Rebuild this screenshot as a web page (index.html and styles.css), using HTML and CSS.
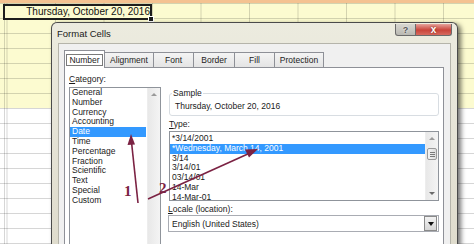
FILE: index.html
```html
<!DOCTYPE html>
<html lang="en">
<head>
    <meta charset="UTF-8">
    <title>Format Cells</title>
    <link rel="stylesheet" href="styles.css">
</head>
<body>

<div class="sheet">
    <div class="active-cell">Thursday, October 20, 2016<span class="fill-handle"></span></div>
</div>

<!-- Format Cells dialog -->
<div class="dialog">
    <div class="titlebar">
        <span class="title">Format Cells</span>
        <div class="caption-buttons">
            <span class="btn-help">?</span>
            <span class="btn-close">x</span>
        </div>
    </div>
    <div class="client">
        <div class="tabs">
            <span class="tab tab-number active"><span class="focus">Number</span></span>
            <span class="tab tab-align">Alignment</span>
            <span class="tab tab-font">Font</span>
            <span class="tab tab-border">Border</span>
            <span class="tab tab-fill">Fill</span>
            <span class="tab tab-protect">Protection</span>
        </div>
        <div class="panel">
            <div class="col-left">
                <div class="label"><u>C</u>ategory:</div>
                <div class="listbox category-list">
                    <ul class="items">
                        <li>General</li>
                        <li>Number</li>
                        <li>Currency</li>
                        <li>Accounting</li>
                        <li class="selected">Date</li>
                        <li>Time</li>
                        <li>Percentage</li>
                        <li>Fraction</li>
                        <li>Scientific</li>
                        <li>Text</li>
                        <li>Special</li>
                        <li>Custom</li>
                    </ul>
                    <div class="scrollbar">
                        <span class="arrow-up"></span>
                    </div>
                </div>
            </div>
            <div class="col-right">
                <fieldset class="sample">
                    <legend>Sample</legend>
                    <div class="sample-text">Thursday, October 20, 2016</div>
                </fieldset>
                <div class="label type-label"><u>T</u>ype:</div>
                <div class="listbox type-list">
                    <ul class="items">
                        <li>*3/14/2001</li>
                        <li class="selected">*Wednesday, March 14, 2001</li>
                        <li>3/14</li>
                        <li>3/14/01</li>
                        <li>03/14/01</li>
                        <li>14-Mar</li>
                        <li>14-Mar-01</li>
                    </ul>
                    <div class="scrollbar">
                        <span class="arrow-up"></span>
                        <span class="thumb"><i></i><i></i><i></i></span>
                        <span class="arrow-down"></span>
                    </div>
                </div>
                <div class="label locale-label"><u>L</u>ocale (location):</div>
                <div class="combo">
                    <span class="combo-text">English (United States)</span>
                    <span class="combo-btn"><span class="arrow-down dark"></span></span>
                </div>
            </div>
        </div>
    </div>
</div>

<!-- hand-drawn annotation arrows -->
<svg class="arrows" width="474" height="244" viewBox="0 0 474 244">
    <line x1="138" y1="203" x2="131.5" y2="142" stroke="#7b2243" stroke-width="1.6"/>
    <polygon points="131,134 127.5,145 135,144.5" fill="#7b2243"/>
    <line x1="148" y1="199" x2="250" y2="153" stroke="#7b2243" stroke-width="1.6"/>
    <polygon points="258,149 245,149.5 249,157.5" fill="#7b2243"/>
    <text x="124" y="196" class="num">1</text>
    <text x="159" y="193" class="num">2</text>
</svg>

</body>
</html>
```

FILE: styles.css
```css
html {
    overflow: hidden;
}
body {
    margin: 0;
    width: 474px;
    height: 244px;
    overflow: hidden;
    font-family: "Liberation Sans", Arial, sans-serif;
    position: relative;
}

/* Spreadsheet behind the dialog */
.sheet {
    height: 244px;
    padding-top: 4px;
    box-sizing: border-box;
    background-color: #fff;
    background-image:
        linear-gradient(#f4c291, #f4c291),
        repeating-linear-gradient(to bottom, rgba(0, 0, 0, 0.16) 0 1px, transparent 1px 15px),
        repeating-linear-gradient(to right, rgba(0, 0, 0, 0.16) 0 1px, transparent 1px 48.5px),
        linear-gradient(rgba(0, 0, 0, 0.16), rgba(0, 0, 0, 0.16)),
        linear-gradient(#fcfbd0, #fcfbd0);
    background-size: 100% 3px, 100% 15px, 48.5px 100%, 1px 100%, 100% 108px;
    background-position: 0 0, 0 3px, 152px 0, 4px 0, 0 0;
    background-repeat: no-repeat, repeat, repeat, no-repeat, no-repeat;
}
.active-cell {
    position: relative;
    margin-left: 3px;
    width: 145px;
    height: 12px;
    border: 2px solid #1d1d1d;
    font-size: 10px;
    line-height: 12px;
    text-align: right;
    color: #111;
    background: #fcfbd0;
}
.fill-handle {
    position: absolute;
    right: -4px;
    bottom: -4px;
    width: 4px;
    height: 4px;
    background: #1d1d1d;
    border: 1px solid #fff;
}

/* Dialog window */
.dialog {
    position: absolute;
    left: 51px;
    top: 22px;
    width: 405px;
    height: 222px;
    overflow: hidden;
    border: 1px solid #4b4b4b;
    border-bottom: none;
    border-radius: 6px 6px 0 0;
    background: linear-gradient(to bottom, #ecebdf, #dfdccd);
    box-shadow: 3px 2px 5px rgba(0, 0, 0, 0.55);
    font-size: 8.5px;
    color: #000;
}
.titlebar {
    display: flex;
    height: 20px;
}
.title {
    padding: 5px 0 0 5px;
    font-size: 9.5px;
    color: #1a1a1a;
}
.caption-buttons {
    display: flex;
    margin-left: auto;
    margin-right: 5px;
    margin-top: 1px;
    height: 12px;
}
.btn-help, .btn-close {
    display: flex;
    align-items: center;
    justify-content: center;
    border: 1px solid #6a6a6a;
    border-top: none;
    font-weight: bold;
    font-size: 9px;
    color: #fff;
}
.btn-help {
    width: 19px;
    border-radius: 0 0 0 3px;
    background: linear-gradient(#d7d6d0, #b9b8b2);
    color: #555;
    text-shadow: 0 0 2px #fff;
}
.btn-close {
    width: 35px;
    border-left: none;
    border-radius: 0 0 3px 0;
    background: linear-gradient(#e6a39b, #c9443a 55%, #d66a5f);
    font-size: 10px;
    text-shadow: 0 0 2px #6d1d14;
}

.client {
    margin: 0 6px;
    height: 201px;
    padding: 8px 0 0 5px;
    border: 1px solid #b5b4aa;
    border-bottom: none;
    background: #f0f0f0;
}

/* Tabs */
.tabs {
    display: flex;
    height: 15px;
}
.tab {
    display: flex;
    align-items: center;
    justify-content: center;
    box-sizing: border-box;
    border: 1px solid #8e9097;
    border-left: none;
    border-bottom: none;
    background: linear-gradient(#f4f4f4, #e4e4e4);
    color: #222;
}
.tab-number { width: 41px; border-left: 1px solid #8e9097; }
.tab-align { width: 49px; }
.tab-font { width: 40px; }
.tab-border { width: 41px; }
.tab-fill { width: 40px; }
.tab-protect { width: 49px; }
.tab.active {
    background: #fff;
    margin-top: -2px;
    height: 18px;
    position: relative;
    z-index: 1;
}
.focus {
    border: 1px solid #7a7a7a;
    padding: 0 2px;
    line-height: 10px;
}

.panel {
    display: flex;
    margin-right: 6px;
    height: 172px;
    overflow: hidden;
    padding: 5px 4px 0 4px;
    border: 1px solid #8e9097;
    border-bottom: none;
    background: #fff;
}
.label {
    height: 12px;
    line-height: 12px;
    color: #1a1a1a;
}
.col-left {
    width: 92px;
}
.col-left .label {
    margin-bottom: 2px;
}
.col-right {
    flex: 1;
    margin-left: 7px;
}

/* List boxes */
.listbox {
    display: flex;
    border: 1px solid #8f949b;
    background: #fff;
}
.items {
    flex: 1;
    list-style: none;
    margin: 0;
    padding: 0;
}
.items li {
    height: 9.8px;
    line-height: 9.8px;
    padding-left: 2px;
    color: #1a1a1a;
    white-space: nowrap;
}
.items li.selected {
    background: #3399ff;
    color: #fff;
}
.category-list {
    height: 160px;
}
.category-list .items li.selected {
    margin-right: 1px;
}
.scrollbar {
    display: flex;
    flex-direction: column;
    align-items: center;
    width: 12px;
    background: linear-gradient(to right, #e8e8e8, #f4f4f4);
    border-left: 1px solid #ededed;
}
.arrow-up, .arrow-down {
    width: 0;
    height: 0;
    border-left: 3px solid transparent;
    border-right: 3px solid transparent;
}
.arrow-up {
    margin-top: 5px;
    border-bottom: 3px solid #9a9a9a;
}
.arrow-down {
    margin-top: auto;
    margin-bottom: 5px;
    border-top: 3px solid #6a6a6a;
}
.arrow-down.dark {
    margin: 0;
    border-top-color: #111;
    border-left-width: 3.5px;
    border-right-width: 3.5px;
    border-top-width: 4px;
}

/* Sample group box */
.sample {
    margin: 15px 0 0 1px;
    padding: 3px 5px 3px;
    border: 1px solid #d8dde2;
    border-radius: 3px;
}
.sample legend {
    padding: 0 1px;
    margin-left: -3px;
    line-height: 10px;
    color: #1a1a1a;
}
.sample-text {
    line-height: 11px;
    color: #1a1a1a;
}
.type-label {
    margin-top: 2px;
    margin-left: 1px;
}
.type-list {
    margin-top: 1px;
    margin-left: 1px;
    height: 68px;
}
.type-list .items {
    padding-top: 2px;
}
.type-list .thumb {
    display: flex;
    flex-direction: column;
    justify-content: center;
    gap: 1px;
    align-items: center;
    width: 10px;
    height: 12px;
    margin-top: 8px;
    box-sizing: border-box;
    border: 1px solid #9a9a9a;
    border-radius: 2px;
    background: linear-gradient(to right, #f4f4f4, #dcdcdc);
}
.thumb i {
    display: block;
    width: 5px;
    height: 1px;
    background: #7a7a7a;
}
.locale-label {
    margin-top: 2px;
}
.combo {
    display: flex;
    align-items: center;
    margin-top: 0;
    height: 15px;
    border: 1px solid #a9acb3;
    background: #fff;
}
.combo-text {
    flex: 1;
    padding-left: 3px;
    color: #1a1a1a;
}
.combo-btn {
    display: flex;
    align-items: center;
    justify-content: center;
    width: 11px;
    height: 13px;
    margin-right: 1px;
    border: 1px solid #8a8a8a;
    background: linear-gradient(#f2f2f2, #d6d6d6);
}

/* Annotation overlay */
.arrows {
    position: absolute;
    left: 0;
    top: 0;
    pointer-events: none;
}
.num {
    font-family: "Liberation Serif", serif;
    font-weight: bold;
    font-size: 15px;
    fill: #7b2243;
}
```
